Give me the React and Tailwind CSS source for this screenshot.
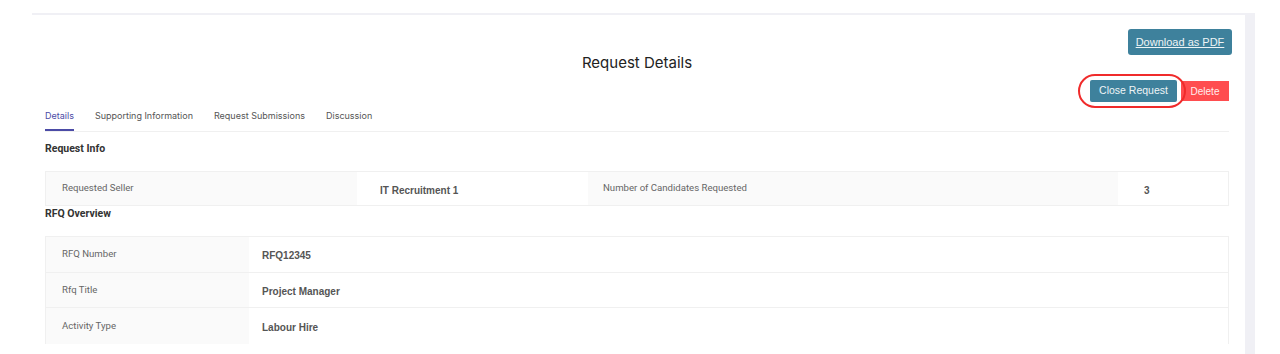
export default function App() {
  const tabs = ["Details", "Supporting Information", "Request Submissions", "Discussion"];
  const rfq = [
    ["RFQ Number", "RFQ12345"],
    ["Rfq Title", "Project Manager"],
    ["Activity Type", "Labour Hire"],
  ];
  const arial = { fontFamily: '"Liberation Sans", Arial, sans-serif' };

  return (
    <div className="w-[1280px] h-[354px] bg-white overflow-hidden pt-[13px]">
      <div className="flex h-full">
        <div className="ml-[32px] w-[1213px] border-t-2 border-[#f0f0f5] bg-white">
          <div className="pl-[13px] pr-[16px]">
            {/* header */}
            <div className="-mr-[3px] flex justify-end pt-[14px]">
              <button
                className="block h-[26px] w-[104px] rounded-[3px] bg-[#3e819c] text-[11px] text-[#eef4f6] underline"
                style={arial}
              >
                Download as PDF
              </button>
            </div>
            <div className="relative h-[54px]">
              <h1
                className="absolute left-0 right-0 top-[-3px] text-center text-[15px] font-normal text-[#222]"
                style={{ fontFamily: 'Inter, sans-serif' }}
              >
                Request Details
              </h1>
              <div className="absolute right-0 top-[25px] flex items-center">
                <div className="relative mr-[4px]">
                  <button
                    className="block h-[22px] w-[87px] rounded-[2px] bg-[#3e819c] text-[10.5px] text-[#eef4f6]"
                    style={arial}
                  >
                    Close Request
                  </button>
                  <div className="absolute left-[-12px] top-[-6px] h-[34px] w-[108px] rounded-[17px] border-2 border-[#f02b2b]" />
                </div>
                <button className="block h-[20px] w-[48px] bg-[#ff4d4f] text-[10px] text-[#ffeeee]" style={arial}>
                  Delete
                </button>
              </div>
            </div>

            {/* tabs */}
            <div
              className="flex gap-[21px] border-b border-[#f0f0f0] text-[9px] leading-[14px]"
              style={{ fontFamily: 'Inter, sans-serif' }}
            >
              {tabs.map((t, i) => (
                <div
                  key={t}
                  className={
                    i === 0
                      ? "border-b-2 border-[#4b4ba6] pb-[6px] text-[#4b4ba6]"
                      : "pb-[8px] text-[#555]"
                  }
                >
                  {t}
                </div>
              ))}
            </div>

            <div style={{ fontFamily: 'Roboto, sans-serif' }}>
              <div className="pt-[10px] pb-[15px] text-[10.5px] leading-[14px] font-bold text-[#333]">Request Info</div>

              <div className="flex h-[35px] border border-[#f0f0f0] text-[9.6px]">
                <div className="flex w-[311px] items-center bg-[#fafafa] pl-[16px] text-[#666]">Requested Seller</div>
                <div className="flex w-[231px] items-center pl-[23px] pt-[3px] text-[10px] font-bold text-[#555]" style={arial}>
                  IT Recruitment 1
                </div>
                <div className="flex w-[530px] items-center bg-[#fafafa] pl-[15px] text-[#666]">Number of Candidates Requested</div>
                <div className="flex flex-1 items-center pl-[26px] pt-[3px] text-[10px] font-bold text-[#555]" style={arial}>
                  3
                </div>
              </div>

              <div className="pt-[1px] pb-[15px] text-[10.5px] leading-[14px] font-bold text-[#333]">RFQ Overview</div>

              <div className="border-x border-t border-[#f0f0f0] text-[9.6px]">
                {rfq.map(([k, v], i) => (
                  <div
                    key={k}
                    className={i < rfq.length - 1 ? "flex h-[35.5px] border-b border-[#f0f0f0]" : "flex h-[36px]"}
                  >
                    <div className="flex w-[203px] items-center bg-[#fafafa] pl-[16px] text-[#666]">{k}</div>
                    <div className="flex flex-1 items-center pl-[13px] pt-[3px] text-[10px] font-bold text-[#555]" style={arial}>
                      {v}
                    </div>
                  </div>
                ))}
              </div>
            </div>
          </div>
        </div>
        <div className="w-[10px] bg-[#f0f0f5]" />
      </div>
    </div>
  );
}
